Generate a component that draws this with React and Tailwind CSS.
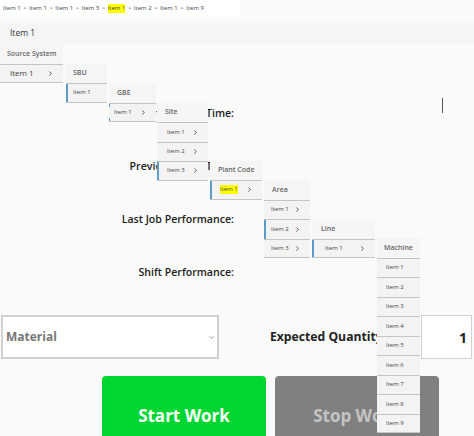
import React from "react";
import { ChevronRight, ChevronDown } from "lucide-react";

const crumbs = ["Item 1", "Item 1", "Item 1", "Item 3", "Item 1", "Item 2", "Item 1", "Item 9"];

const nineItems = ["Item 1", "Item 2", "Item 3", "Item 4", "Item 5", "Item 6", "Item 7", "Item 8", "Item 9"];

// cascading menus lie over the page, each one opens below and right of the last
const menus = [
  {
    title: "Source System",
    box: "left-0 top-[44px] w-[63px]",
    head: "pl-[7px] text-[7px]",
    row: "pl-[10px] pr-[9px] text-[8px]",
    items: ["Item 1"],
    arrow: true,
    active: -1,
  },
  {
    title: "SBU",
    box: "left-[66px] top-[63.5px] w-[41px]",
    head: "pl-[7px] text-[7px]",
    row: "pl-[7px] text-[6px]",
    items: ["Item 1"],
    arrow: false,
    active: 0,
  },
  {
    title: "GBE",
    box: "left-[109px] top-[83px] w-[47px]",
    head: "pl-[8px] text-[7px]",
    row: "pl-[5px] pr-[9px] text-[6px]",
    items: ["Item 1"],
    arrow: true,
    active: -1,
    ticks: true,
  },
  {
    title: "Site",
    box: "left-[157px] top-[102.5px] w-[51px]",
    head: "pl-[8px] text-[7px]",
    row: "pl-[10px] pr-[9px] text-[6px]",
    items: ["Item 1", "Item 2", "Item 3"],
    arrow: true,
    active: 2,
  },
  {
    title: "Plant Code",
    box: "left-[210px] top-[160.5px] w-[52px]",
    head: "pl-[8px] text-[7px]",
    row: "pl-[10px] pr-[9px] text-[6px]",
    items: ["Item 1"],
    arrow: true,
    active: 0,
    mark: true,
  },
  {
    title: "Area",
    box: "left-[264px] top-[180px] w-[46px]",
    head: "pl-[8px] text-[7px]",
    row: "pl-[7px] pr-[9px] text-[6px]",
    items: ["Item 1", "Item 2", "Item 3"],
    arrow: true,
    active: 1,
  },
  {
    title: "Line",
    box: "left-[312px] top-[219px] w-[63px]",
    head: "pl-[9px] text-[7px]",
    row: "pl-[13px] pr-[9px] text-[6px]",
    items: ["Item 1"],
    arrow: true,
    active: 0,
  },
  {
    title: "Machine",
    box: "left-[377px] top-[238px] w-[43px]",
    head: "pl-[7px] text-[7px]",
    row: "pl-[9px] text-[6px]",
    items: nineItems,
    arrow: false,
    active: -1,
  },
];

const CascadeMenu = ({ menu }) => (
  <div className={`absolute ${menu.box} text-[#444]`}>
    <div className={`flex h-[19.5px] items-center whitespace-nowrap bg-[#f5f5f5] font-semibold text-[#666] ${menu.head}`}>
      {menu.title}
    </div>
    {menu.items.map((item, i) => (
      <div
        key={i}
        className={`relative flex h-[19.5px] items-center border-t border-t-[#c4c4c4] bg-[#f3f3f3] ${menu.row} ${
          i === menu.items.length - 1 ? "border-b border-b-[#c4c4c4]" : ""
        }`}
      >
        {i === menu.active && <span className="absolute inset-y-0 left-0 w-[2px] bg-[#5b9bc8]" />}
        {menu.ticks && <span className="absolute left-0 top-0 h-[3px] w-px bg-[#5b9bc8]" />}
        {menu.ticks && <span className="absolute bottom-0 left-0 h-[3px] w-px bg-[#5b9bc8]" />}
        <span className={menu.mark ? "bg-[#ffff00]" : ""}>{item}</span>
        {menu.arrow && <ChevronRight size={7} strokeWidth={3} className="ml-auto text-[#444]" />}
      </div>
    ))}
  </div>
);

const StatLabel = ({ className, children }) => (
  <div className={`h-[18px] w-[234px] shrink-0 text-right text-[10.6px] leading-[18px] font-semibold text-[#222] ${className}`}>
    {children}
  </div>
);

export default function App() {
  return (
    <div className="relative flex h-[436px] w-[474px] flex-col overflow-hidden bg-[#fafafa] font-['Open_Sans',sans-serif]">
      <div className="flex h-[16px] w-[240px] shrink-0 items-center gap-[2.5px] bg-white pl-[3px] text-[6px] text-[#444]">
        {crumbs.map((c, i) => (
          <React.Fragment key={i}>
            <span className={i === 4 ? "bg-[#ffff00]" : ""}>{c}</span>
            {i < crumbs.length - 1 && <span>&gt;</span>}
          </React.Fragment>
        ))}
      </div>

      <div className="mt-[7px] flex h-[21px] shrink-0 items-center bg-[#f5f5f5] pl-[10px] text-[8.5px] text-[#333]">
        Item 1
      </div>

      <div className="relative mt-[60px] h-[18px] shrink-0">
        <StatLabel>Current Cycle Time:</StatLabel>
        <div className="absolute left-[442px] top-[-6px] h-[15px] w-px bg-[#555]" />
      </div>
      <StatLabel className="mt-[35px]">Previous Cycle Time:</StatLabel>
      <StatLabel className="mt-[35px]">Last Job Performance:</StatLabel>
      <StatLabel className="mt-[35px]">Shift Performance:</StatLabel>

      <div className="mt-[34px] flex h-[44px] shrink-0 items-center">
        <div className="ml-[1px] flex h-full w-[218px] items-center border-2 border-[#d0d0d0] bg-white pr-[2px] pl-[3px] text-[12px] font-bold text-[#777]">
          Material
          <ChevronDown size={7} strokeWidth={2.5} className="ml-auto text-[#777]" />
        </div>
        <div className="ml-[51px] text-[12.2px] font-bold text-[#222]">Expected Quantity</div>
        <div className="absolute left-[421px] flex h-[44px] w-[51px] items-center justify-end border border-[#d0d0d0] bg-white pr-[4px] text-[14px] font-bold text-[#222]">
          1
        </div>
      </div>

      <div className="mt-[17px] ml-[102px] flex shrink-0 gap-[9px]">
        <button className="flex h-[80px] w-[164px] items-start justify-center rounded-[4px] bg-[#00d632] pt-[27px] text-[17px] font-bold text-white">
          Start Work
        </button>
        <button className="flex h-[80px] w-[164px] items-start justify-center rounded-[4px] bg-[#808080] pt-[27px] text-[17px] font-bold text-[#c4c4c4]">
          Stop Work
        </button>
      </div>

      {menus.map((m) => (
        <CascadeMenu key={m.title} menu={m} />
      ))}
    </div>
  );
}
